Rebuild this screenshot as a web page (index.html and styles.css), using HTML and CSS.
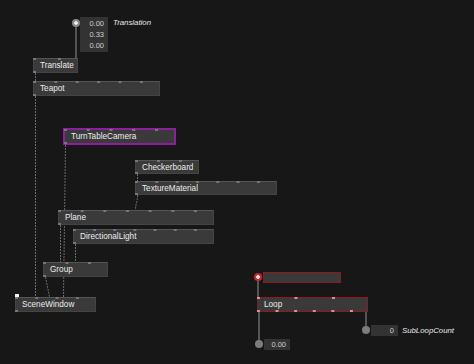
FILE: index.html
```html
<!DOCTYPE html>
<html lang="en">
<head>
  <meta charset="UTF-8">
  <meta name="viewport" content="width=device-width, initial-scale=1.0">
  <title>patch</title>
  <link rel="stylesheet" href="styles.css">
</head>
<body>
  <div class="patch">
    <svg class="links" width="474" height="364" viewBox="0 0 474 364">
      <line class="iolink" x1="76" y1="23" x2="76" y2="58"/>
      <line x1="35.5" y1="73" x2="35.5" y2="81"/>
      <line x1="35.5" y1="96" x2="35.5" y2="297"/>
      <line x1="65.5" y1="145" x2="63.5" y2="297"/>
      <line x1="60.5" y1="225" x2="60.5" y2="262"/>
      <line x1="75.5" y1="244" x2="75.5" y2="262"/>
      <line x1="45.5" y1="277" x2="49.5" y2="297"/>
      <line x1="137.5" y1="174" x2="137.5" y2="181"/>
      <path d="M137.5 195 C137.5 203 135.5 203 135.5 210"/>
      <line class="iolink" x1="258" y1="277" x2="258" y2="297"/>
      <line class="iolink" x1="259" y1="312" x2="259" y2="344"/>
      <line class="iolink" x1="366" y1="312" x2="366" y2="330"/>
    </svg>

    <!-- translation iobox -->
    <div class="pin pin-translation"></div>
    <div class="iobox io-translation">
      <div>0.00</div>
      <div>0.33</div>
      <div>0.00</div>
    </div>
    <div class="label lb-translation">Translation</div>

    <div class="node n-translate">Translate</div>
    <div class="node n-teapot">Teapot</div>
    <div class="node n-ttc">TurnTableCamera</div>
    <div class="node n-checker">Checkerboard</div>
    <div class="node n-texmat">TextureMaterial</div>
    <div class="node n-plane">Plane</div>
    <div class="node n-dirlight">DirectionalLight</div>
    <div class="node n-group">Group</div>
    <div class="marker"></div>
    <div class="node n-scene">SceneWindow</div>

    <!-- loop region -->
    <div class="pin pin-red"></div>
    <div class="node n-redbox"></div>
    <div class="node n-loop">Loop</div>
    <div class="pin pin-sub"></div>
    <div class="iobox io-sub">0</div>
    <div class="label lb-sub">SubLoopCount</div>
    <div class="pin pin-out"></div>
    <div class="iobox io-out">0.00</div>
  </div>
</body>
</html>
```

FILE: styles.css
```css
* {
  margin: 0;
  padding: 0;
  box-sizing: border-box;
}

body {
  background-color: #171717;
  font-family: "Liberation Sans", Arial, sans-serif;
  color: #ececec;
}

.patch {
  position: relative;
  width: 474px;
  height: 364px;
  overflow: hidden;
}

.links {
  position: absolute;
  left: 0;
  top: 0;
}

.links line, .links path {
  stroke: #6c6c6c;
  stroke-width: 1;
  stroke-dasharray: 2 1;
  fill: none;
}

.links line.iolink {
  stroke: #555;
  stroke-width: 2;
  stroke-dasharray: none;
}

/* nodes */
.node {
  position: absolute;
  height: 15px;
  padding-left: 6px;
  font-size: 8.2px;
  line-height: 14px;
  white-space: nowrap;
  background-color: #3a3a3a;
  border: 1px solid #444;
  border-top-color: #555;
}

.node::before, .node::after {
  content: "";
  position: absolute;
  left: -1px;
  right: -1px;
  height: 2px;
  background-image: linear-gradient(to right, #777 0 3px, transparent 3px);
  background-repeat: space no-repeat;
  background-size: 20px 2px;
}

.node::before {
  top: -1px;
}

.node::after {
  bottom: -1px;
  background-size: 3px 2px;
  background-repeat: no-repeat;
}

.n-translate { left: 33px; top: 58px; width: 45px; }
.n-teapot { left: 33px; top: 81px; width: 127px; }
.n-ttc {
  left: 63px;
  top: 128px;
  width: 113px;
  height: 17px;
  line-height: 13px;
  border: 2px solid #8d1f9e;
}
.n-checker { left: 135px; top: 160px; width: 64px; height: 14px; line-height: 13px; }
.n-texmat { left: 135px; top: 181px; width: 142px; height: 14px; line-height: 13px; }
.n-plane { left: 58px; top: 210px; width: 156px; }
.n-dirlight { left: 73px; top: 229px; width: 141px; }
.n-group { left: 43px; top: 262px; width: 65px; }
.n-scene { left: 15px; top: 297px; width: 81px; }

.n-redbox {
  left: 263px;
  top: 272px;
  width: 78px;
  height: 11px;
  border: 1px solid #8e1a20;
}
.n-redbox::before, .n-redbox::after { display: none; }

.n-loop {
  left: 257px;
  top: 297px;
  width: 111px;
  border: 1px solid #8e1a20;
}
.n-loop::before, .n-loop::after {
  background-image: linear-gradient(to right, #c99a9a 0 3px, transparent 3px);
  background-size: 18px 2px;
  background-repeat: space no-repeat;
}
.n-loop::before {
  background-size: 36px 2px;
}

.marker {
  position: absolute;
  left: 15px;
  top: 294px;
  width: 4px;
  height: 4px;
  background-color: #f4f4f4;
}

/* io boxes */
.iobox {
  position: absolute;
  background-color: #333;
  color: #d0d0d0;
  font-size: 7.5px;
  line-height: 11px;
  text-align: right;
  padding-right: 4px;
}

.io-translation { left: 80px; top: 17px; width: 28px; height: 35px; padding-top: 1px; }
.io-sub { left: 371px; top: 325px; width: 27px; height: 11px; }
.io-out { left: 264px; top: 339px; width: 26px; height: 11px; }

.label {
  position: absolute;
  font-size: 7.8px;
  font-style: italic;
  color: #e8e8e8;
  line-height: 11px;
}

.lb-translation { left: 113px; top: 17px; }
.lb-sub { left: 402px; top: 325px; }

.pin {
  position: absolute;
  width: 8px;
  height: 8px;
  border-radius: 50%;
  background-color: #7c7c7c;
}

.pin-translation {
  left: 72px;
  top: 19px;
  background: radial-gradient(circle, #f0f0f0 0 1.5px, #8a8a8a 2px);
}

.pin-red {
  left: 254px;
  top: 273px;
  background: radial-gradient(circle, #ffe0e0 0 1.5px, #c22a35 2.2px);
}

.pin-sub { left: 362px; top: 326px; }
.pin-out { left: 255px; top: 340px; }
```
